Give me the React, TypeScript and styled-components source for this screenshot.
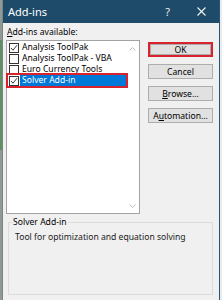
import React from 'react';
import styled, {createGlobalStyle} from "styled-components";

const GlobalStyle = createGlobalStyle`
  html, body {
    margin: 0;
    padding: 0;
    width: 222px;
    height: 300px;
    overflow: hidden;
  }
  body {
    /* what shows of the excel sheet behind the dialog */
    background: linear-gradient(to bottom, #8f9a93 0px, #8f9a93 40px, #5e9160 40px, #5e9160 150px, #8f9a93 150px);
    font-family: "Noto Sans", "Open Sans", sans-serif;
  }
`

const Window = styled.div`
  margin-left: 2px;
  width: 218px;
  height: 300px;
  box-sizing: border-box;
  border-left: 1px solid #7d8288;
  border-right: 1px solid #2a5576;
  background: #f0f0f0;
  display: flex;
  flex-direction: column;
  box-shadow: 2px 0 0 #e9ecee;
`

const TitleBar = styled.div`
  height: 23px;
  flex: none;
  background: #1e4b69;
  color: #ffffff;
  display: flex;
  align-items: center;
  padding-left: 5px;
  font-size: 11px;
`

const Title = styled.span`
  flex: 1;
`

const Help = styled.span`
  font-size: 11px;
  color: #e6edf2;
  margin-right: 27px;
`

const CloseIcon = styled.svg`
  width: 9px;
  height: 9px;
  margin-right: 13px;
  stroke: #f2f5f7;
  stroke-width: 1.1px;
`

const Body = styled.div`
  flex: 1;
  display: flex;
  flex-direction: column;
  padding: 3px 0 0 3px;
  font-size: 8.6px;
  color: #000;
`

const Label = styled.div`
  padding-left: 1px;
  line-height: 12px;
`

const Key = styled.span`
  text-decoration: underline;
  text-underline-offset: 1px;
`

const MainRow = styled.div`
  display: flex;
  margin-top: 2px;
`

const ListBox = styled.div`
  width: 134px;
  height: 174px;
  box-sizing: border-box;
  border: 1px solid #a3a3a3;
  background: #ffffff;
  display: flex;
`

const Items = styled.div`
  flex: 1;
  padding: 1px 0 0 1px;
`

interface RowProps {
    $marked?: boolean;
}

const Row = styled.div<RowProps>`
  height: 11px;
  display: flex;
  align-items: center;
  padding-left: 1px;
  outline: ${props => (props.$marked ? '2px solid #d8232f' : 'none')};
`

const Box = styled.div`
  width: 10px;
  height: 10px;
  box-sizing: border-box;
  border: 1px solid #333333;
  background: #ffffff;
  flex: none;
  display: flex;
`

const Tick = styled.svg`
  fill: none;
  stroke: #3a3a3a;
  stroke-width: 1px;
`

interface ItemTextProps {
    $selected?: boolean;
}

const ItemText = styled.div<ItemTextProps>`
  flex: 1;
  height: 11px;
  line-height: 11px;
  padding-left: 2px;
  margin-left: 1px;
  white-space: nowrap;
  background: ${props => (props.$selected ? '#0078d7' : 'transparent')};
  color: ${props => (props.$selected ? '#ffffff' : '#000000')};
`

const ScrollBar = styled.div`
  width: 13px;
  display: flex;
  flex-direction: column;
  justify-content: space-between;
  align-items: center;
  padding: 6px 0 5px;
`

const Arrow = styled.svg`
  width: 7px;
  height: 4px;
  fill: none;
  stroke: #bcbcbc;
  stroke-width: 1px;
`

const Buttons = styled.div`
  display: flex;
  flex-direction: column;
  gap: 7px;
  margin: 2px 0 0 8px;
`

interface ButtonProps {
    $focus?: boolean;
}

const Button = styled.div<ButtonProps>`
  width: 65px;
  height: 15px;
  box-sizing: border-box;
  border: ${props => (props.$focus ? '2px solid #d8232f' : '1px solid #adadad')};
  box-shadow: ${props => (props.$focus ? 'inset 0 0 0 1px #adadad' : 'none')};
  background: #e1e1e1;
  display: flex;
  align-items: center;
  justify-content: center;
  font-size: 8.6px;
`

const GroupBox = styled.fieldset`
  margin: 3px 6px 0 2px;
  padding: 0 5px;
  height: 78px;
  box-sizing: border-box;
  border: 1px solid #dcdcdc;
`

const Legend = styled.legend`
  margin-left: -2px;
  padding: 0 1px;
  line-height: 11px;
`

const Description = styled.div`
  margin-top: 4px;
  padding-left: 1px;
  line-height: 11px;
  color: #1a1a1a;
`

const addins = [
    {name: 'Analysis ToolPak', checked: true},
    {name: 'Analysis ToolPak - VBA', checked: false},
    {name: 'Euro Currency Tools', checked: false},
    {name: 'Solver Add-in', checked: true, selected: true},
];

const App = () => {
    return (
        <>
            <GlobalStyle/>
            <Window>
                <TitleBar>
                    <Title>Add-ins</Title>
                    <Help>?</Help>
                    <CloseIcon viewBox="0 0 9 9">
                        <line x1="0.5" y1="0.5" x2="8.5" y2="8.5"/>
                        <line x1="8.5" y1="0.5" x2="0.5" y2="8.5"/>
                    </CloseIcon>
                </TitleBar>
                <Body>
                    <Label><Key>A</Key>dd-ins available:</Label>
                    <MainRow>
                        <ListBox>
                            <Items>
                                {addins.map(item => (
                                    <Row key={item.name} $marked={item.selected}>
                                        <Box>
                                            {item.checked && (
                                                <Tick viewBox="0 0 8 8">
                                                    <polyline points="1,4 3,6.2 7,1.2"/>
                                                </Tick>
                                            )}
                                        </Box>
                                        <ItemText $selected={item.selected}>{item.name}</ItemText>
                                    </Row>
                                ))}
                            </Items>
                            <ScrollBar>
                                <Arrow viewBox="0 0 7 4"><polyline points="0.5,3.5 3.5,0.5 6.5,3.5"/></Arrow>
                                <Arrow viewBox="0 0 7 4"><polyline points="0.5,0.5 3.5,3.5 6.5,0.5"/></Arrow>
                            </ScrollBar>
                        </ListBox>
                        <Buttons>
                            <Button $focus>OK</Button>
                            <Button>Cancel</Button>
                            <Button><span><Key>B</Key>rowse...</span></Button>
                            <Button><span>A<Key>u</Key>tomation...</span></Button>
                        </Buttons>
                    </MainRow>
                    <GroupBox>
                        <Legend>Solver Add-in</Legend>
                        <Description>Tool for optimization and equation solving</Description>
                    </GroupBox>
                </Body>
            </Window>
        </>
    )
}

export default App
